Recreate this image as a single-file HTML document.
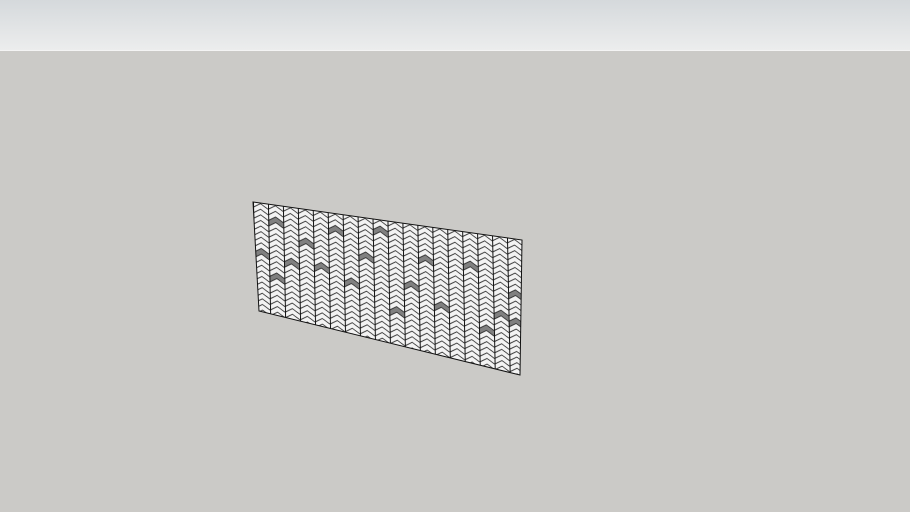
<!DOCTYPE html>
<html><head><meta charset="utf-8"><style>
html,body{margin:0;padding:0;width:910px;height:512px;overflow:hidden;background:#cbcac7}
.sky{position:absolute;left:0;top:0;width:910px;height:50px;background:linear-gradient(#d5d9dc,#eceded)}
.hz{position:absolute;left:0;top:50px;width:910px;height:1px;background:#f4f4f4}
svg{position:absolute;left:0;top:0}
</style></head><body>
<div class="sky"></div><div class="hz"></div>
<svg width="910" height="512" viewBox="0 0 910 512">
<defs>
<clipPath id="c"><polygon points="253,202 522,240 520,375 259,311"/></clipPath>
<pattern id="p" width="14.94" height="5.6" patternUnits="userSpaceOnUse">
<path d="M0,5.2 L7.47,0.6 L14.94,5.2" fill="none" stroke="#2a2a2a" stroke-width="0.9"/>
<line x1="0.4" y1="0" x2="0.4" y2="5.6" stroke="#111" stroke-width="1.2"/>
</pattern>
<path id="d" d="M0,5.2 l7.47,-4.6 l7.47,4.6 v5.6 l-7.47,-4.6 l-7.47,4.6z"/>
</defs>
<g clip-path="url(#c)">
<polygon points="253,202 522,240 520,375 259,311" fill="#f3f3f3"/>
<g transform="matrix(1,0.141,0.02,1,253,202)">
<g fill="#808080">
<use href="#d" x="14.94" y="11.2"/>
<use href="#d" x="0" y="44.8"/>
<use href="#d" x="29.88" y="50.4"/>
<use href="#d" x="44.82" y="28"/>
<use href="#d" x="14.94" y="67.2"/>
<use href="#d" x="59.76" y="50.4"/>
<use href="#d" x="74.7" y="11.2"/>
<use href="#d" x="89.64" y="61.6"/>
<use href="#d" x="104.58" y="33.6"/>
<use href="#d" x="119.52" y="5.6"/>
<use href="#d" x="134.46" y="84"/>
<use href="#d" x="164.34" y="28"/>
<use href="#d" x="149.4" y="56"/>
<use href="#d" x="179.28" y="72.8"/>
<use href="#d" x="209.16" y="28"/>
<use href="#d" x="224.1" y="89.6"/>
<use href="#d" x="239.04" y="72.8"/>
<use href="#d" x="254" y="78.4"/>
<use href="#d" x="254" y="50.4"/>
</g>
<rect x="-20" y="-10" width="320" height="170" fill="url(#p)"/>
</g>
</g>
<polygon points="253,202 522,240 520,375 259,311" fill="none" stroke="#111" stroke-width="1"/>
</svg>
</body></html>
